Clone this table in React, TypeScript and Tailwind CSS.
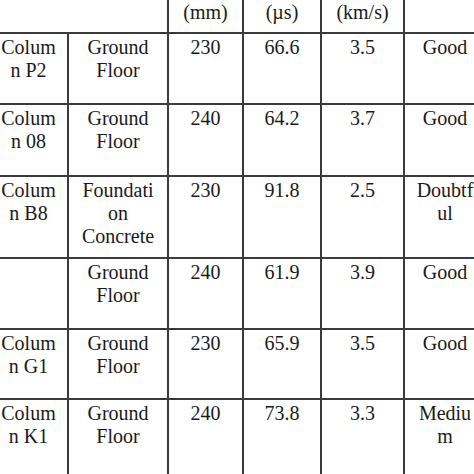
const rows = [
  { h: "h-[71px]", col: "Column P2", loc: "Ground Floor", len: "230", time: "66.6", vel: "3.5", grade: "Good" },
  { h: "h-[72px]", col: "Column 08", loc: "Ground Floor", len: "240", time: "64.2", vel: "3.7", grade: "Good" },
  { h: "h-[82px]", col: "Column B8", loc: "Foundation Concrete", len: "230", time: "91.8", vel: "2.5", grade: "Doubtful" },
  { h: "h-[71px]", col: "", loc: "Ground Floor", len: "240", time: "61.9", vel: "3.9", grade: "Good" },
  { h: "h-[70px]", col: "Column G1", loc: "Ground Floor", len: "230", time: "65.9", vel: "3.5", grade: "Good" },
  { h: "h-[80px]", col: "Column K1", loc: "Ground Floor", len: "240", time: "73.8", vel: "3.3", grade: "Medium" },
];

const font = "font-['Liberation_Serif','Times_New_Roman',serif] text-[20px] leading-[23px] text-[#1a1a1a]";
const cell = `${font} border-2 border-[#3a3a3a] px-[10px] pt-[2px] align-top text-center [overflow-wrap:anywhere]`;
const head = `${font} border-x-2 border-b-2 border-[#3a3a3a] px-[10px] pt-px align-top text-center font-normal`;

export default function App() {
  return (
    <div className="w-[474px] h-[474px] overflow-hidden bg-white">
      <table className={`${font} ml-[-12px] w-[497px] table-fixed border-collapse`}>
        <colgroup>
          <col className="w-[79px]" />
          <col className="w-[100px]" />
          <col className="w-[75px]" />
          <col className="w-[78px]" />
          <col className="w-[83px]" />
          <col className="w-[82px]" />
        </colgroup>
        <thead>
          <tr className="h-[33px]">
            <th colSpan={2} className={head}></th>
            <th className={head}>(mm)</th>
            <th className={head}>(µs)</th>
            <th className={head}>(km/s)</th>
            <th className={head}></th>
          </tr>
        </thead>
        <tbody>
          {rows.map((r, i) => (
            <tr key={i} className={r.h}>
              <td className={cell}>{r.col}</td>
              <td className={cell}>{r.loc}</td>
              <td className={cell}>{r.len}</td>
              <td className={cell}>{r.time}</td>
              <td className={cell}>{r.vel}</td>
              <td className={cell}>{r.grade}</td>
            </tr>
          ))}
        </tbody>
      </table>
    </div>
  );
}
